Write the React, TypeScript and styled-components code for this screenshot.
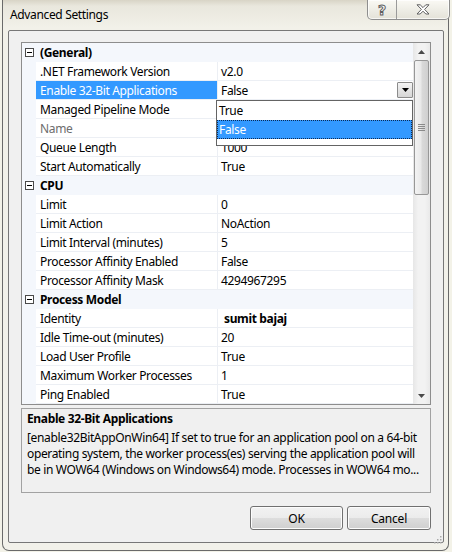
import styled, { createGlobalStyle } from 'styled-components';

type Row =
    | { kind: 'category'; label: string }
    | { kind: 'property'; label: string; value: string; selected?: boolean; readOnly?: boolean; bold?: boolean };

// values of the two rows hidden behind the open drop-down are left empty
const rows: Row[] = [
    { kind: 'category', label: '(General)' },
    { kind: 'property', label: '.NET Framework Version', value: 'v2.0' },
    { kind: 'property', label: 'Enable 32-Bit Applications', value: 'False', selected: true },
    { kind: 'property', label: 'Managed Pipeline Mode', value: '' },
    { kind: 'property', label: 'Name', value: '', readOnly: true },
    { kind: 'property', label: 'Queue Length', value: '1000' },
    { kind: 'property', label: 'Start Automatically', value: 'True' },
    { kind: 'category', label: 'CPU' },
    { kind: 'property', label: 'Limit', value: '0' },
    { kind: 'property', label: 'Limit Action', value: 'NoAction' },
    { kind: 'property', label: 'Limit Interval (minutes)', value: '5' },
    { kind: 'property', label: 'Processor Affinity Enabled', value: 'False' },
    { kind: 'property', label: 'Processor Affinity Mask', value: '4294967295' },
    { kind: 'category', label: 'Process Model' },
    { kind: 'property', label: 'Identity', value: 'sumit bajaj', bold: true },
    { kind: 'property', label: 'Idle Time-out (minutes)', value: '20' },
    { kind: 'property', label: 'Load User Profile', value: 'True' },
    { kind: 'property', label: 'Maximum Worker Processes', value: '1' },
    { kind: 'property', label: 'Ping Enabled', value: 'True' },
];

const options = ['True', 'False'];

const descriptionLines = [
    '[enable32BitAppOnWin64] If set to true for an application pool on a 64-bit',
    'operating system, the worker process(es) serving the application pool will',
    'be in WOW64 (Windows on Windows64) mode. Processes in WOW64 mo...',
];

function App() {
    return (
        <>
            <GlobalStyle />
            <Window>
                <TitleBar>
                    <Title>Advanced Settings</Title>
                    <CaptionButtons>
                        <HelpButton>?</HelpButton>
                        <CloseButton>
                            <svg width="14" height="11" viewBox="0 0 14 11">
                                <path
                                    d="M1 0.8 L4.2 0.8 L7 3.6 L9.8 0.8 L13 0.8 L8.6 5.4 L13 10 L9.8 10 L7 7.2 L4.2 10 L1 10 L5.4 5.4 Z"
                                    fill="#fff"
                                    stroke="#5f5f5f"
                                    strokeWidth="1"
                                    strokeLinejoin="round"
                                />
                            </svg>
                        </CloseButton>
                    </CaptionButtons>
                </TitleBar>

                <Client>
                    <PropertyGrid>
                        <Rows>
                            {rows.map((row) =>
                                row.kind === 'category' ? (
                                    <CategoryRow key={row.label}>
                                        <Gutter>
                                            <Expander />
                                        </Gutter>
                                        <CategoryLabel>{row.label}</CategoryLabel>
                                    </CategoryRow>
                                ) : (
                                    <PropertyRow key={row.label}>
                                        <Gutter />
                                        <Label $selected={row.selected} $readOnly={row.readOnly}>
                                            {row.label}
                                        </Label>
                                        <Value $bold={row.bold}>
                                            {row.value}
                                            {row.selected && (
                                                <DropButton>
                                                    <svg width="7" height="4" viewBox="0 0 7 4">
                                                        <path d="M0 0 H7 L3.5 4 Z" fill="#000" />
                                                    </svg>
                                                </DropButton>
                                            )}
                                        </Value>
                                    </PropertyRow>
                                )
                            )}

                            <DropList>
                                {options.map((option) => (
                                    <Option key={option} $active={option === 'False'}>
                                        {option}
                                    </Option>
                                ))}
                            </DropList>
                        </Rows>

                        <ScrollBar>
                            <ScrollArrow>
                                <svg width="7" height="4" viewBox="0 0 7 4">
                                    <path d="M0 4 H7 L3.5 0 Z" fill="#4a4a4a" />
                                </svg>
                            </ScrollArrow>
                            <Track>
                                <Thumb>
                                    <svg width="7" height="8" viewBox="0 0 7 8">
                                        <path d="M0 0.5 H7 M0 2.5 H7 M0 4.5 H7 M0 6.5 H7" stroke="#8a8a8a" strokeWidth="1" />
                                    </svg>
                                </Thumb>
                            </Track>
                            <ScrollArrow>
                                <svg width="7" height="4" viewBox="0 0 7 4">
                                    <path d="M0 0 H7 L3.5 4 Z" fill="#4a4a4a" />
                                </svg>
                            </ScrollArrow>
                        </ScrollBar>
                    </PropertyGrid>

                    <Description>
                        <DescriptionTitle>Enable 32-Bit Applications</DescriptionTitle>
                        {descriptionLines.map((line) => (
                            <DescriptionLine key={line}>{line}</DescriptionLine>
                        ))}
                    </Description>

                    <Buttons>
                        <DialogButton $width={93}>OK</DialogButton>
                        <DialogButton $width={84}>Cancel</DialogButton>
                    </Buttons>

                    <SizeGrip>
                        <svg width="10" height="10" viewBox="0 0 10 10">
                            <g fill="#a9a9a9">
                                <rect x="8" y="2" width="1.5" height="1.5" />
                                <rect x="5" y="5" width="1.5" height="1.5" />
                                <rect x="8" y="5" width="1.5" height="1.5" />
                                <rect x="2" y="8" width="1.5" height="1.5" />
                                <rect x="5" y="8" width="1.5" height="1.5" />
                                <rect x="8" y="8" width="1.5" height="1.5" />
                            </g>
                        </svg>
                    </SizeGrip>
                </Client>
            </Window>
        </>
    );
}

export default App;





const GlobalStyle = createGlobalStyle`
    html, body {
        margin: 0;
        padding: 0;
    }
    body {
        width: 452px;
        height: 552px;
        overflow: hidden;
        background: #f3f2e8;
        font-family: 'Noto Sans', 'DejaVu Sans', sans-serif;
        font-size: 12px;
        letter-spacing: -0.35px;
        color: #000;
    }
`;

const Window = styled.div`
    margin-left: 2px;
    width: 447px;
    height: 551px;
    box-sizing: border-box;
    border: 1px solid #6a6a6a;
    border-top: none;
    border-radius: 0 0 7px 7px;
    padding: 0 4px 7px 5px;
    display: flex;
    flex-direction: column;
    background: linear-gradient(#d8d4c6 0px, #e9e7dd 6px, #f2f1e9 28px, #f2f1ea 100%);
`;

const TitleBar = styled.div`
    height: 30px;
    margin: 0 -4px 0 -5px;
    display: flex;
    align-items: flex-start;
`;

const Title = styled.div`
    padding: 7px 0 0 7px;
    line-height: 16px;
    font-size: 12px;
    color: #000;
`;

const CaptionButtons = styled.div`
    margin: 0 -2px 0 auto;
    height: 20px;
    display: flex;
    box-sizing: border-box;
    border: 1px solid #8e8e8e;
    border-top: none;
    border-radius: 0 0 5px 5px;
    overflow: hidden;
    background: linear-gradient(#faf9f4, #ecebe3 60%, #e4e2d8);
    box-shadow: inset 0 0 0 1px rgba(255, 255, 255, 0.7);
`;

const HelpButton = styled.div`
    width: 28px;
    display: flex;
    justify-content: center;
    align-items: center;
    font-family: 'DejaVu Sans', sans-serif;
    font-weight: bold;
    font-size: 14px;
    line-height: 14px;
    letter-spacing: 0;
    color: #fff;
    -webkit-text-stroke: 1px #5f5f5f;
`;

const CloseButton = styled.div`
    width: 52px;
    display: flex;
    justify-content: center;
    align-items: center;
    border-left: 1px solid #9a9a9a;
`;

const Client = styled.div`
    position: relative;
    flex: 1;
    border: 1px solid #777;
    border-radius: 2px;
    background: #f0f0f0;
    padding: 11px 12px 0 12px;
    display: flex;
    flex-direction: column;
`;

const PropertyGrid = styled.div`
    height: 363px;
    box-sizing: border-box;
    border: 1px solid #8d8d8d;
    background: #fff;
    display: flex;
`;

const Rows = styled.div`
    position: relative;
    flex: 1;
    min-width: 0;
`;

const line = '#eceff4';

const RowBase = styled.div`
    height: 19px;
    display: grid;
    grid-template-columns: 14px 182px 1fr;
    line-height: 20px;
`;

const CategoryRow = styled(RowBase)`
    background: #f4f7fc;
`;

const PropertyRow = styled(RowBase)``;

const Gutter = styled.div`
    background: #f4f7fc;
    position: relative;
`;

const Expander = styled.div`
    position: absolute;
    left: 3px;
    top: 5px;
    width: 9px;
    height: 9px;
    box-sizing: border-box;
    border: 1px solid #4a4a4a;
    background: #fff;

    &::after {
        content: '';
        position: absolute;
        left: 1px;
        right: 1px;
        top: 3px;
        height: 1px;
        background: #000;
    }
`;

const CategoryLabel = styled.div`
    grid-column: 2 / 4;
    padding-left: 4px;
    font-weight: bold;
    white-space: nowrap;
`;

const Label = styled.div<{ $selected?: boolean; $readOnly?: boolean }>`
    box-sizing: border-box;
    padding-left: 4px;
    white-space: nowrap;
    overflow: hidden;
    border-right: 1px solid ${line};
    border-bottom: 1px solid ${line};
    background: ${({ $selected }) => ($selected ? '#3399ff' : '#fff')};
    color: ${({ $selected, $readOnly }) => ($selected ? '#fff' : $readOnly ? '#6d6d6d' : '#000')};
`;

const Value = styled.div<{ $bold?: boolean }>`
    position: relative;
    box-sizing: border-box;
    padding-left: ${({ $bold }) => ($bold ? '6px' : '3px')};
    white-space: nowrap;
    overflow: hidden;
    border-bottom: 1px solid ${line};
    font-weight: ${({ $bold }) => ($bold ? 'bold' : 'normal')};
`;

const DropButton = styled.div`
    position: absolute;
    right: 0;
    top: 1px;
    width: 16px;
    height: 16px;
    box-sizing: border-box;
    border: 1px solid #8b8b8b;
    border-radius: 1px;
    background: linear-gradient(#f4f4f4, #e4e4e4 50%, #d6d6d6);
    display: flex;
    justify-content: center;
    align-items: center;
`;

const DropList = styled.div`
    position: absolute;
    left: 194px;
    top: 57px;
    width: 197px;
    height: 46px;
    box-sizing: border-box;
    border: 1px solid #646464;
    background: #fff;
`;

const Option = styled.div<{ $active?: boolean }>`
    height: 19px;
    line-height: 19px;
    box-sizing: border-box;
    padding-left: 2px;
    background: ${({ $active }) => ($active ? '#3399ff' : '#fff')};
    color: ${({ $active }) => ($active ? '#fff' : '#000')};
    outline: ${({ $active }) => ($active ? '1px dotted #0b2a55' : 'none')};
    outline-offset: -1px;
`;

const ScrollBar = styled.div`
    width: 17px;
    display: flex;
    flex-direction: column;
    background: linear-gradient(to right, #e6e6e6, #f2f2f2 30%, #f2f2f2 70%, #e9e9e9);
`;

const ScrollArrow = styled.div`
    height: 17px;
    display: flex;
    justify-content: center;
    align-items: center;
`;

const Track = styled.div`
    flex: 1;
    padding: 0 1px;
`;

const Thumb = styled.div`
    height: 135px;
    box-sizing: border-box;
    border: 1px solid #979797;
    border-radius: 2px;
    background: linear-gradient(to right, #f3f3f3, #e9e9e9 45%, #d9d9d9 55%, #cfcfcf);
    display: flex;
    justify-content: center;
    align-items: center;
`;

const Description = styled.div`
    margin-top: 3px;
    height: 85px;
    box-sizing: border-box;
    border: 1px solid #a2a2a2;
    padding: 2px 5px 0 5px;
    line-height: 16px;
`;

const DescriptionTitle = styled.div`
    font-weight: bold;
    margin-bottom: 3px;
`;

const DescriptionLine = styled.div`
    white-space: nowrap;
    overflow: hidden;
    text-overflow: ellipsis;
`;

const Buttons = styled.div`
    margin-top: 13px;
    display: flex;
    justify-content: flex-end;
    gap: 4px;
`;

const DialogButton = styled.button<{ $width: number }>`
    width: ${({ $width }) => $width}px;
    height: 24px;
    padding: 0;
    border: 1px solid #707070;
    border-radius: 3px;
    background: linear-gradient(#f2f2f2, #ebebeb 50%, #dddddd 51%, #cfcfcf);
    box-shadow: inset 0 0 0 1px #fcfcfc;
    font-family: 'Noto Sans', 'DejaVu Sans', sans-serif;
    font-size: 12px;
    letter-spacing: -0.2px;
    color: #000;
`;

const SizeGrip = styled.div`
    position: absolute;
    right: 1px;
    bottom: 1px;
    width: 10px;
    height: 10px;
`;
